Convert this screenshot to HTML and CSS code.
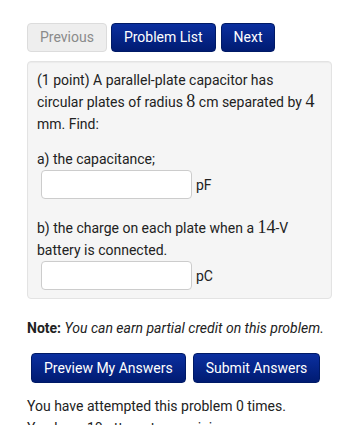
FILE: index.html
```html
<!DOCTYPE html>
<html lang="en">
<head>
    <meta charset="UTF-8">
    <meta name="viewport" content="width=device-width, initial-scale=1.0">
    <title>Problem 3</title>
    <link rel="stylesheet" href="styles.css">
</head>
<body>
    <!-- Problem navigation -->
    <div class="nav">
        <span class="btn btn-disabled">Previous</span>
        <a class="btn btn-primary" href="#">Problem List</a>
        <a class="btn btn-primary" href="#">Next</a>
    </div>

    <!-- Problem text -->
    <div class="problem">
        <div class="para">(1 point) A parallel-plate capacitor has circular plates of radius <span class="math">8</span> cm separated by <span class="math">4</span> mm. Find:</div>

        <div class="para part">a) the capacitance;</div>
        <div class="answer">
            <input type="text" class="answer-input">
            <span class="unit">pF</span>
        </div>

        <div class="para part-b">b) the charge on each plate when a <span class="math">14</span>-V battery is connected.</div>
        <div class="answer">
            <input type="text" class="answer-input">
            <span class="unit">pC</span>
        </div>
    </div>

    <p class="note"><b>Note:</b> <i>You can earn partial credit on this problem.</i></p>

    <div class="submit-row">
        <a class="btn btn-primary btn-wide" href="#">Preview My Answers</a>
        <a class="btn btn-primary btn-wide" href="#">Submit Answers</a>
    </div>

    <div class="attempts">
        You have attempted this problem 0 times.<br>
        You have 10 attempts remaining.
    </div>
</body>
</html>
```

FILE: styles.css
```css
body {
    margin: 0;
    padding: 23px 28px 0 27px;
    font-family: Roboto, "Liberation Sans", Arial, sans-serif;
    font-size: 14px;
    line-height: 22px;
    color: #222;
    background: #fff;
}

/* Buttons */
.nav { display: flex; gap: 4px; }

.btn {
    display: inline-block;
    padding: 4px 12px;
    line-height: 19px;
    font-size: 14px;
    border: 1px solid #001a66;
    border-radius: 4px;
    text-decoration: none;
    white-space: nowrap;
}
.btn-primary {
    color: #fff;
    background: linear-gradient(#0b2f9f, #001b72);
}
.btn-disabled {
    color: #8a8a8a;
    background: #eeeeee;
    border-color: #dcdcdc;
}
.nav .btn + .btn + .btn { margin-left: 1px; }

/* Problem box */
.problem {
    margin-top: 9px;
    width: 285px;
    padding: 7px 9px 8px 9px;
    background: #f5f5f5;
    border: 1px solid #e3e3e3;
    border-radius: 4px;
    box-shadow: inset 0 1px 1px rgba(0, 0, 0, 0.04);
}

.math {
    font-family: "Liberation Serif", "DejaVu Serif", serif;
    font-size: 18px;
    line-height: 1;
}

.part { margin-top: 13px; }
.part-b { margin-top: 18px; }

.answer {
    display: flex;
    align-items: center;
    gap: 4px;
    padding-left: 4px;
}
.answer-input {
    box-sizing: border-box;
    width: 151px;
    height: 29px;
    margin: 0;
    border: 1px solid #cccccc;
    border-radius: 4px;
    background: #fff;
}
.unit { line-height: 22px; }

/* Note and submit buttons */
.note { margin: 18px 0 0 0; }

.submit-row {
    display: flex;
    gap: 7px;
    margin-top: 14px;
    padding-left: 4px;
}
.btn-wide { line-height: 20px; }

.attempts { margin-top: 12px; }
```
